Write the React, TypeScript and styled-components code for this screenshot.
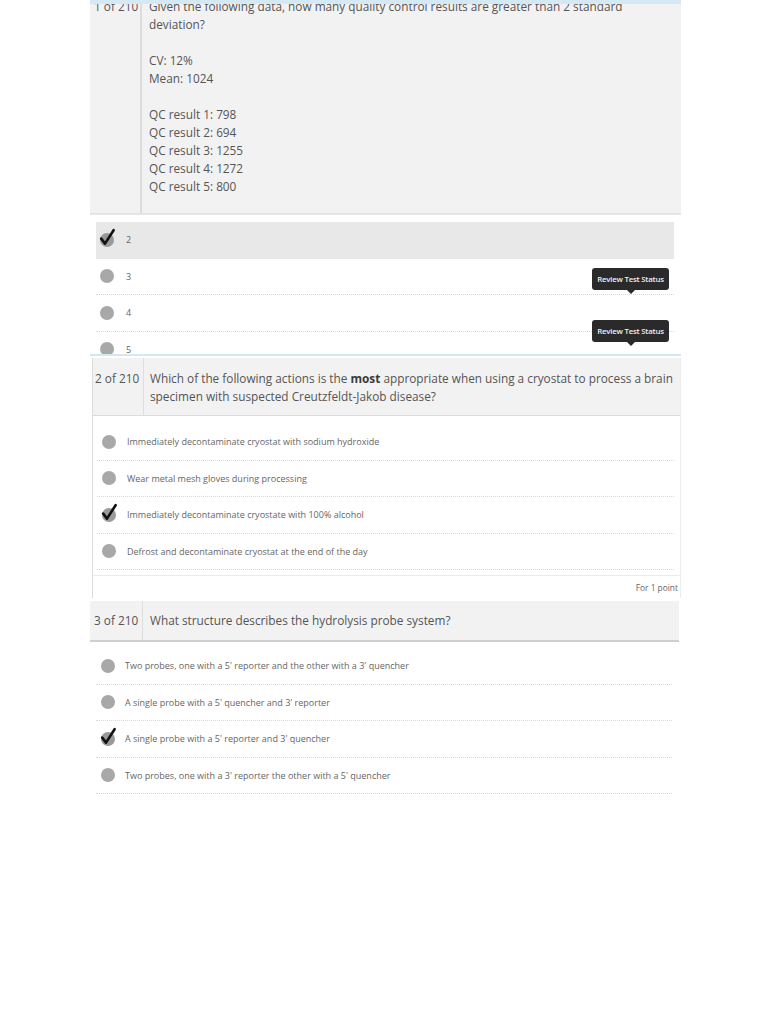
import React from "react";
import styled, { createGlobalStyle, css } from "styled-components";

const Global = createGlobalStyle`
  body { margin: 0; background: #fff; font-family: "Open Sans", "Liberation Sans", sans-serif; }
`;

const Page = styled.div`
  display: flex;
  flex-direction: column;
  width: 591px;
  padding-left: 90px;
`;

const Shot = styled.section`
  position: relative;
  height: 356px;
  overflow: hidden;
  border-bottom: 2px solid #d2e8f2;
  box-sizing: border-box;
  flex: none;
`;

const TopBar = styled.div`
  position: absolute;
  top: 0;
  left: 0;
  right: 0;
  height: 4px;
  background: #d4e9f3;
`;

const Head = styled.div<{ $top?: number; $border?: string }>`
  display: flex;
  background: #f2f2f2;
  margin-top: ${(p) => p.$top ?? 0}px;
  border-bottom: ${(p) => p.$border ?? "1px solid #e2e2e2"};
  color: #555;
  font-size: 11.8px;
  line-height: 18px;
`;

const NumCol = styled.div<{ $w: number; $pad: string; $line: string }>`
  flex: none;
  width: ${(p) => p.$w}px;
  padding: ${(p) => p.$pad};
  border-right: ${(p) => p.$line};
  box-sizing: border-box;
  white-space: nowrap;
`;

const TextCol = styled.div<{ $pad: string }>`
  flex: 1;
  min-width: 0;
  padding: ${(p) => p.$pad};
`;

const Line = styled.div`
  white-space: nowrap;
`;

const Strong = styled.b`
  color: #3a3a3a;
`;

const Blank = styled.div`
  height: 18px;
`;

const Options = styled.div<{ $pad: string }>`
  position: relative;
  display: flex;
  flex-direction: column;
  padding: ${(p) => p.$pad};
`;

const Row = styled.div<{ $sel?: boolean; $gap: number; $pl: number }>`
  flex: none;
  display: flex;
  align-items: center;
  gap: ${(p) => p.$gap}px;
  height: 35.5px;
  padding-left: ${(p) => p.$pl}px;
  border-bottom: 1px dotted #d8d8d8;
  font-size: 9px;
  color: #666;
  white-space: nowrap;
  ${(p) =>
    p.$sel &&
    css`
      background: #e8e8e8;
      border-bottom-color: transparent;
    `}
`;

const Dot = styled.span`
  flex: none;
  width: 14px;
  height: 14px;
  border-radius: 50%;
  background: #a8a8a8;
`;

const CheckWrap = styled.span`
  flex: none;
  width: 14px;
  height: 14px;
  position: relative;
  display: inline-block;
`;

const Check = () => (
  <CheckWrap>
    <svg width="18" height="20" viewBox="0 0 18 20" style={{ position: "absolute", left: -2, top: -5 }}>
      <circle cx="9" cy="12" r="7" fill="#9a9a9a" />
      <path d="M3.2 10.6 L7 15.6 L15.6 2.2" fill="none" stroke="#111" strokeWidth="2.6" strokeLinecap="round" strokeLinejoin="round" />
    </svg>
  </CheckWrap>
);

const Tip = styled.div<{ $top: number }>`
  position: absolute;
  top: ${(p) => p.$top}px;
  right: 12px;
  width: 77px;
  height: 22px;
  border-radius: 3px;
  background: #2a2a2a;
  color: #f0f0f0;
  font-size: 7.8px;
  font-weight: 600;
  letter-spacing: -0.2px;
  display: flex;
  align-items: center;
  justify-content: center;
  &::after {
    content: "";
    position: absolute;
    left: 50%;
    bottom: -4px;
    margin-left: -4px;
    border-left: 4px solid transparent;
    border-right: 4px solid transparent;
    border-top: 4px solid #2a2a2a;
  }
`;

const Card = styled.section<{ $ml: number; $w: number; $top: number; $edge?: boolean }>`
  display: flex;
  flex-direction: column;
  margin-left: ${(p) => p.$ml}px;
  margin-top: ${(p) => p.$top}px;
  width: ${(p) => p.$w}px;
  box-sizing: border-box;
  ${(p) =>
    p.$edge &&
    css`
      border-left: 1px solid #dcdcdc;
      border-right: 1px solid #ececec;
    `}
`;

const Footer = styled.div`
  margin-top: 5px;
  border-top: 1px solid #ececec;
  height: 22px;
  display: flex;
  align-items: center;
  justify-content: flex-end;
  padding-right: 2px;
  font-size: 8.4px;
  color: #666;
`;

const Spacer = styled.div`
  height: 7px;
  border-top: 1px solid #e8e8e8;
`;

type Opt = { text: string; sel?: boolean };

const q2: Opt[] = [
  { text: "Immediately decontaminate cryostat with sodium hydroxide" },
  { text: "Wear metal mesh gloves during processing" },
  { text: "Immediately decontaminate cryostate with 100% alcohol", sel: true },
  { text: "Defrost and decontaminate cryostat at the end of the day" },
];

const q3: Opt[] = [
  { text: "Two probes, one with a 5' reporter and the other with a 3' quencher" },
  { text: "A single probe with a 5' quencher and 3' reporter" },
  { text: "A single probe with a 5' reporter and 3' quencher", sel: true },
  { text: "Two probes, one with a 3' reporter the other with a 5' quencher" },
];

export default function App() {
  return (
    <Page>
      <Global />
      <Shot>
        <Head $top={-12}>
          <NumCol $w={52} $pad="9px 0 0 4px" $line="2px solid #dcdcdc">1 of 210</NumCol>
          <TextCol $pad="9px 8px 18px 7px">
            <Line>Given the following data, how many quality control results are greater than 2 standard</Line>
            <Line>deviation?</Line>
            <Blank />
            <Line>CV: 12%</Line>
            <Line>Mean: 1024</Line>
            <Blank />
            <Line>QC result 1: 798</Line>
            <Line>QC result 2: 694</Line>
            <Line>QC result 3: 1255</Line>
            <Line>QC result 4: 1272</Line>
            <Line>QC result 5: 800</Line>
          </TextCol>
        </Head>
        <Spacer />
        <Options $pad="0 7px 0 6px">
          <Row $sel $gap={12} $pl={4}>
            <Check />2
          </Row>
          <Row $gap={12} $pl={4}>
            <Dot />3
          </Row>
          <Row $gap={12} $pl={4}>
            <Dot />4
          </Row>
          <Row $gap={12} $pl={4}>
            <Dot />5
          </Row>
          <Tip $top={46}>Review Test Status</Tip>
          <Tip $top={98}>Review Test Status</Tip>
        </Options>
        <TopBar />
      </Shot>

      <Card $ml={2} $w={589} $top={2} $edge>
        <Head $border="1px solid #dcdcdc">
          <NumCol $w={51} $pad="11px 0 10px 2px" $line="1px solid #dedede">2 of 210</NumCol>
          <TextCol $pad="11px 4px 10px 6px">
            <Line>
              Which of the following actions is the <Strong>most</Strong> appropriate when using a cryostat to process a brain
            </Line>
            <Line>specimen with suspected Creutzfeldt-Jakob disease?</Line>
          </TextCol>
        </Head>
        <Options $pad="8px 6px 0 4px">
          {q2.map((o) => (
            <Row key={o.text} $gap={11} $pl={5}>
              {o.sel ? <Check /> : <Dot />}
              {o.text}
            </Row>
          ))}
        </Options>
        <Footer>For 1 point</Footer>
      </Card>

      <Card $ml={0} $w={589} $top={3}>
        <Head $border="2px solid #cfcfcf">
          <NumCol $w={53} $pad="10px 0 11px 4px" $line="1px solid #dedede">3 of 210</NumCol>
          <TextCol $pad="10px 8px 11px 7px">
            <Line>What structure describes the hydrolysis probe system?</Line>
          </TextCol>
        </Head>
        <Options $pad="6px 7px 0 6px">
          {q3.map((o) => (
            <Row key={o.text} $gap={10} $pl={5}>
              {o.sel ? <Check /> : <Dot />}
              {o.text}
            </Row>
          ))}
        </Options>
      </Card>
    </Page>
  );
}
